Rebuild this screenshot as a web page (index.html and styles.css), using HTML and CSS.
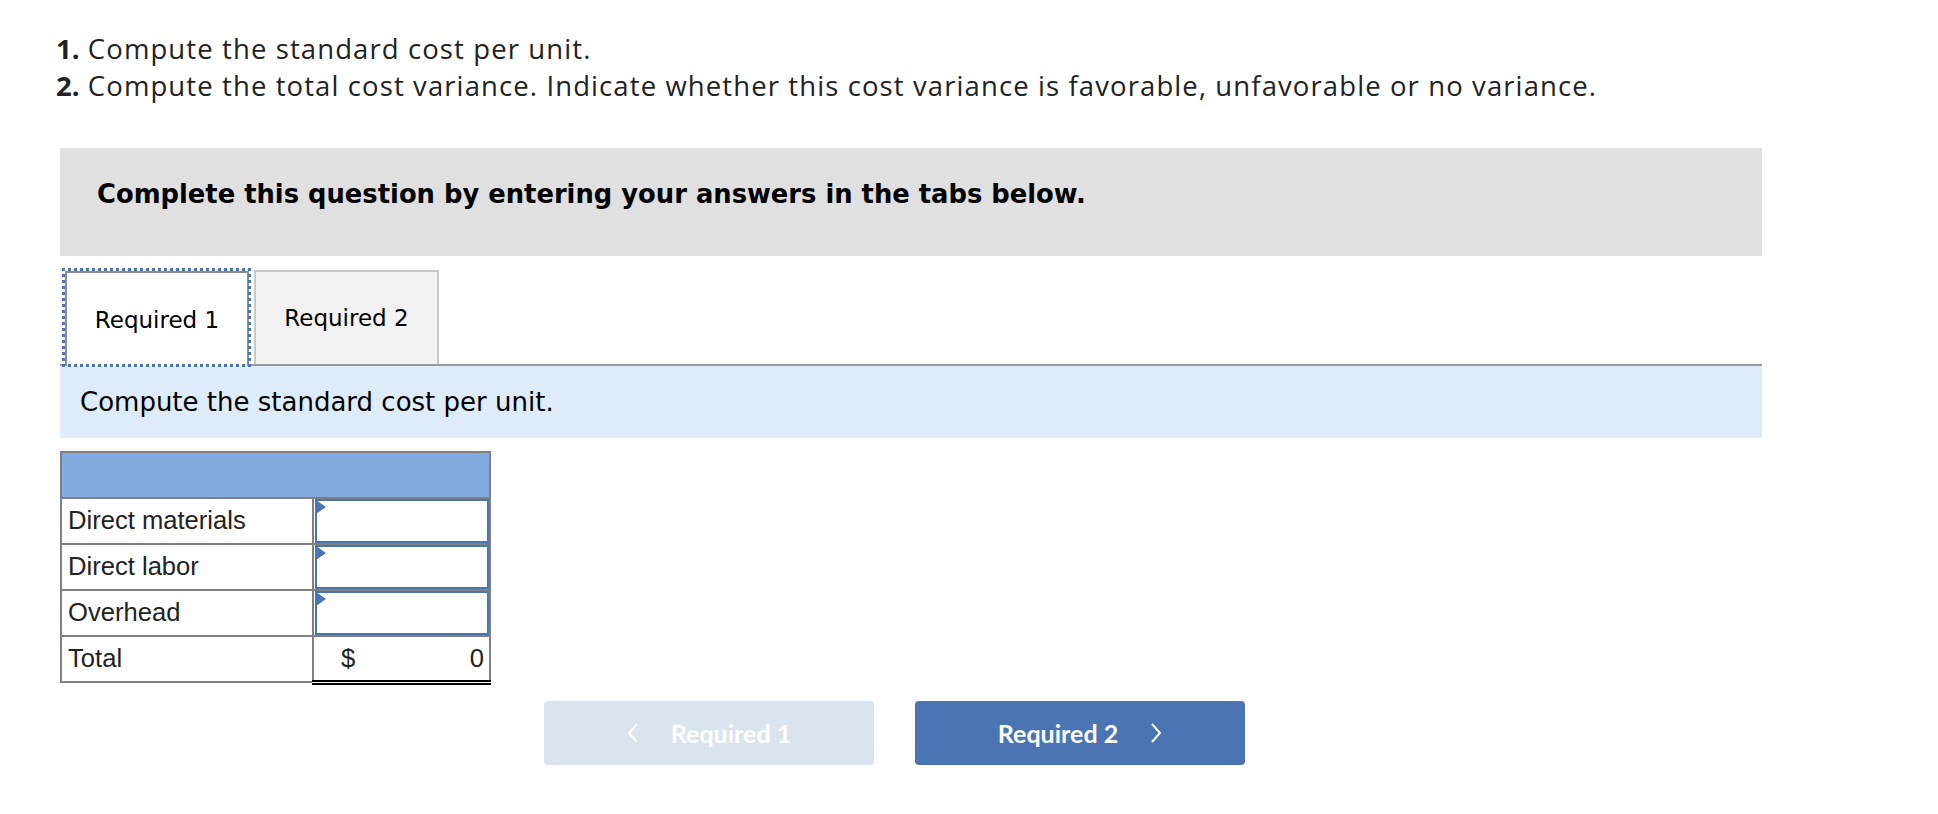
FILE: index.html
```html
<!DOCTYPE html>
<html lang="en">
<head>
<meta charset="utf-8">
<title>Standard cost</title>
<link rel="stylesheet" href="styles.css">
</head>
<body>
<div class="question">
  <p><b>1.</b> Compute the standard cost per unit.</p>
  <p><b>2.</b> Compute the total cost variance. Indicate whether this cost variance is favorable, unfavorable or no variance.</p>
</div>
<div class="work">
  <div class="banner">Complete this question by entering your answers in the tabs below.</div>
  <div class="tabs">
    <div class="tab active">Required 1</div>
    <div class="tab">Required 2</div>
  </div>
  <div class="prompt">Compute the standard cost per unit.</div>
  <table class="grid">
    <tr class="head"><td colspan="2"></td></tr>
    <tr><td class="label">Direct materials</td><td class="val"><div class="input"><span class="flag"></span></div></td></tr>
    <tr><td class="label">Direct labor</td><td class="val"><div class="input"><span class="flag"></span></div></td></tr>
    <tr><td class="label">Overhead</td><td class="val"><div class="input"><span class="flag"></span></div></td></tr>
    <tr class="total"><td class="label">Total</td><td class="val sum"><span class="cur">$</span><span class="num">0</span></td></tr>
  </table>
  <div class="nav">
    <button class="btn prev"><svg class="chev" viewBox="0 0 12 22" width="12" height="22"><path d="M10 2 L2 11 L10 20" fill="none" stroke="#fff" stroke-width="2"/></svg><span>Required 1</span></button>
    <button class="btn next"><span>Required 2</span><svg class="chev" viewBox="0 0 12 22" width="12" height="22"><path d="M2 2 L10 11 L2 20" fill="none" stroke="#fff" stroke-width="2"/></svg></button>
  </div>
</div>
</body>
</html>
```
FILE: styles.css
```css
* { box-sizing: border-box; }
body { margin: 0; background: #fff; color: #222; }
.question { padding: 30px 0 0 56px; font-family: "Open Sans", Lato, sans-serif; font-size: 27.5px; letter-spacing: 1.1px; line-height: 37px; color: #222; }
.question p { margin: 0; }
.question b { font-weight: 700; letter-spacing: 0; }
.work { margin: 44px 0 0 60px; width: 1702px; }
.banner { height: 108px; background: #e0e0e0; display: flex; align-items: center; padding: 0 0 16px 37px; font-family: "DejaVu Sans", Verdana, sans-serif; font-weight: 700; font-size: 25.8px; color: #000; }
.tabs { margin-top: 10px; display: flex; align-items: flex-end; gap: 5px; padding-left: 5px; border-bottom: 2px solid #999; height: 100px; }
.tab { position: relative; display: flex; align-items: center; justify-content: center; font-family: "DejaVu Sans", Verdana, sans-serif; font-size: 23px; color: #000; }
.tab.active { width: 184px; height: 95px; margin-bottom: -2px; background: #fff; border: 2px solid #8c8c8c; border-bottom: none; }
.tab.active::after { content: ""; position: absolute; left: -5px; right: -4px; top: -5px; bottom: -1px; pointer-events: none;
  background:
    repeating-linear-gradient(90deg, #4a74b4 0 3px, transparent 3px 6px) top left / 100% 3px no-repeat,
    repeating-linear-gradient(90deg, #4a74b4 0 3px, transparent 3px 6px) bottom left / 100% 3px no-repeat,
    repeating-linear-gradient(180deg, #4a74b4 0 3px, transparent 3px 6px) top left / 3px 100% no-repeat,
    repeating-linear-gradient(180deg, #4a74b4 0 3px, transparent 3px 6px) top right / 3px 100% no-repeat; }
.tab:not(.active) { width: 185px; height: 94px; background: #f2f2f2; border: 2px solid #c8c8c8; border-bottom: none; }
.prompt { height: 72px; background: #deebf8; display: flex; align-items: center; padding: 0 0 0 20px; font-family: "DejaVu Sans", Verdana, sans-serif; font-size: 26px; color: #000; }
.grid { margin-top: 13px; border-collapse: collapse; font-family: "Liberation Sans", Arial, sans-serif; font-size: 25.6px; color: #222; }
.grid td { border: 2px solid #808080; padding: 0; height: 46px; }
.grid .head td { background: #84abdf; height: 46px; }
.grid .label { width: 252px; padding: 0 0 2px 6px; }
.grid .val { width: 177px; position: relative; }
.input { position: relative; margin: 0 0 0 1px; height: 44px; border: 2px solid #4a74b4; background: #fff; }
.flag { position: absolute; left: -1px; top: -1px; width: 0; height: 0; border-top: 7px solid transparent; border-bottom: 7px solid transparent; border-left: 10px solid #4a74b4; }
.grid .sum { border-top: 2px solid #000; border-bottom: 5px double #000; }
.cur { display: inline-block; margin-left: 27px; }
.num { float: right; margin-right: 5px; }
.nav { display: flex; gap: 41px; margin: 16px 0 0 484px; }
.btn { width: 330px; height: 64px; border: none; border-radius: 4px; display: flex; align-items: center; justify-content: center; gap: 32px; font-family: Lato, "Open Sans", sans-serif; font-weight: 700; font-size: 25px; color: #fff; }
.btn.prev { background: #dae4ef; }
.btn.next { background: #4a74b4; padding-right: 6px; }
.chev { display: block; }
```
